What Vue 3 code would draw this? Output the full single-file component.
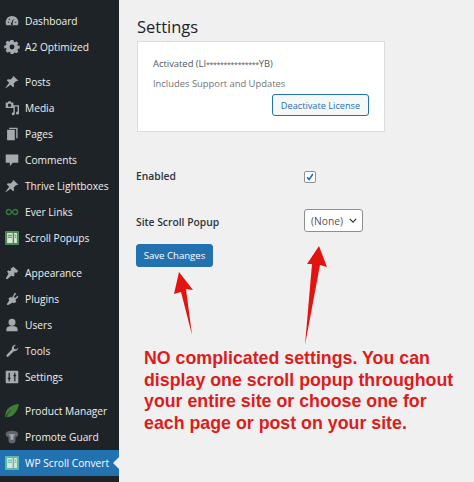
<script setup>
const groups = [
  [
    { label: 'Dashboard', icon: 'dash' },
    { label: 'A2 Optimized', icon: 'gear' },
  ],
  [
    { label: 'Posts', icon: 'pin' },
    { label: 'Media', icon: 'media' },
    { label: 'Pages', icon: 'pages' },
    { label: 'Comments', icon: 'comment' },
    { label: 'Thrive Lightboxes', icon: 'pin' },
    { label: 'Ever Links', icon: 'infinity' },
    { label: 'Scroll Popups', icon: 'scroll' },
  ],
  [
    { label: 'Appearance', icon: 'brush' },
    { label: 'Plugins', icon: 'plug' },
    { label: 'Users', icon: 'user' },
    { label: 'Tools', icon: 'wrench' },
    { label: 'Settings', icon: 'sliders' },
  ],
  [
    { label: 'Product Manager', icon: 'leaf' },
    { label: 'Promote Guard', icon: 'guard' },
    { label: 'WP Scroll Convert', icon: 'scroll', active: true },
  ],
]
</script>

<template>
  <div class="page">
    <nav class="sidebar">
      <ul v-for="(group, g) in groups" :key="g" class="group">
        <li v-for="item in group" :key="item.label" class="item" :class="{ active: item.active }">
          <svg class="icon" viewBox="0 0 20 20">
            <template v-if="item.icon === 'dash'">
              <path class="fill" d="M10 3C5 3 1 7 1 12c0 1.500.3 2.800 1 4h16c.7-1.200 1-2.500 1-4 0-5-4-9-9-9z" />
              <path class="cut" d="M9 13l2.500-6 .8.3L11 13.500a1.500 1.500 0 1 1-2-.5zM4 11h2v1.500H4zM14 11h2v1.500h-2zM6 6.500l1.300 1.300-1 1L5 7.500z" />
            </template>
            <template v-else-if="item.icon === 'gear'">
              <path class="fill" fill-rule="evenodd" d="M8 0h4l.5 2.500 1.700.7 2.100-1.400 2.800 2.800-1.400 2.100.7 1.700L21 8v4l-2.500.5-.7 1.700 1.400 2.100-2.800 2.800-2.100-1.400-1.800.8L12 20H8l-.5-2.500-1.700-.7-2.100 1.400-2.800-2.800 1.400-2.100-.7-1.700L-1 12V8l2.500-.5.7-1.700-1.400-2.100 2.800-2.800 2.100 1.400 1.800-.8zM10 6.500a3.500 3.500 0 1 0 0 7 3.500 3.500 0 0 0 0-7z" />
            </template>
            <path v-else-if="item.icon === 'pin'" class="fill" d="M11.500 1l7.500 7-2 1-1-.5-3.500 3.500.5 4-1.500 1.500-3.500-3.500L1 19l-.5-.5 5.500-7.500L2.500 7.500 4 6l4 .5L11.500 3l-.5-1z" />
            <path v-else-if="item.icon === 'media'" class="fill" fill-rule="evenodd" d="M1 2h3l1-1.500h3L9 2h3v8H1zM6.500 3.500a2.500 2.500 0 1 0 0 5 2.500 2.500 0 0 0 0-5zM13 6h7v11a2.200 2.200 0 1 1-2-2V8h-4v10a2.200 2.200 0 1 1-2-2V6z" />
            <path v-else-if="item.icon === 'pages'" class="fill" d="M6 1h12v15h-2V3H6zM3 4h11v15H3z" />
            <path v-else-if="item.icon === 'comment'" class="fill" d="M1 2h18v12h-8l-4 5v-5H1z" />
            <path v-else-if="item.icon === 'infinity'" class="green-line" d="M5.500 6.500a3.500 3.500 0 1 0 0 7c3.500 0 5.500-7 9-7a3.500 3.500 0 1 1 0 7c-3.500 0-5.500-7-9-7z" />
            <template v-else-if="item.icon === 'scroll'">
              <rect x="0" y="0" width="20" height="20" rx="1" :class="item.active ? 'teal' : 'green'" />
              <path class="page-lines" d="M3 3h8v14H3zM13 3h4v14h-4z" />
              <path :class="item.active ? 'teal-line' : 'green-dark'" d="M4 6h6M4 9h6M14 6h2M14 9h2" />
            </template>
            <path v-else-if="item.icon === 'brush'" class="fill" d="M12 1l7 6-3 3-2-1-1 3 1 1-2 2-3-1-6 5-2-1 4-7-2-3 2-2 1 1 3-1-1-2z" />
            <path v-else-if="item.icon === 'plug'" class="fill" d="M14 1l2 1-3.500 5 2 1.500L18 5l1 2-4 4 1 3-3 2-2-1-7 4-1.500-1.500L6 12 5 9l3-2 2 1z" />
            <path v-else-if="item.icon === 'user'" class="fill" d="M10 1a4.500 4.500 0 1 1 0 10 4.500 4.500 0 0 1 0-10zM2 19v-3c0-3 3-4.500 8-4.500s8 1.500 8 4.500v3z" />
            <path v-else-if="item.icon === 'wrench'" class="fill" d="M19 5c0 3-3 6-6 5L5 18c-1.500 1.500-4 -.5-2.500-2.500L10 7.500C9 4 12 1 15.500 1L12.500 4.500l1 2.500 2.500 1z" />
            <template v-else-if="item.icon === 'sliders'">
              <rect x="1" y="1" width="18" height="18" rx="1" class="fill" />
              <path class="dark-line" d="M6 4v12M14 4v12M4 12h4M12 8h4" />
            </template>
            <path v-else-if="item.icon === 'leaf'" class="leaf" d="M20 0C12 1 3 4 1 13c-.5 3-1 5-1 7 3-6 6-10 10-12-3 3-6 6-8 11 9 0 15-6 18-19z" />
            <template v-else-if="item.icon === 'guard'">
              <path class="guard" d="M10 1c5 0 9 1.500 9 5 0 3-3 4-4 4v5c0 3-2 4-5 4s-5-1-5-4v-5C4 10 1 9 1 6c0-3.500 4-5 9-5z" />
              <path class="fill" d="M5 6h10l-3 3v5H8V9z" />
            </template>
          </svg>
          <span class="label">{{ item.label }}</span>
        </li>
      </ul>
    </nav>

    <main class="main">
      <h1 class="title">Settings</h1>

      <section class="card">
        <p class="activated">Activated (LI<span class="stars">***************</span>YB)</p>
        <p class="includes">Includes Support and Updates</p>
        <div class="card-actions">
          <button class="btn-outline" type="button">Deactivate License</button>
        </div>
      </section>

      <div class="form-row enabled-row">
        <span class="field-label">Enabled</span>
        <span class="checkbox">
          <svg viewBox="0 0 12 12" class="check"><path d="M2.500 6.500l2.500 2.500 4.500-6.500" /></svg>
        </span>
      </div>

      <div class="form-row select-row">
        <span class="field-label">Site Scroll Popup</span>
        <span class="select">
          (None)
          <svg viewBox="0 0 10 6" class="chevron"><path d="M1 1l4 4 4-4" /></svg>
        </span>
      </div>

      <button class="btn-primary" type="button">Save Changes</button>

      <p class="note">
        NO complicated settings. You can<br />
        display one scroll popup throughout<br />
        your entire site or choose one for<br />
        each page or post on your site.
      </p>

      <svg class="arrows" viewBox="0 0 474 482">
        <polygon points="179,272 193,290 186,289 192,335 181,292 174,294" />
        <polygon points="319,246 327,267 320,265 305,345 312,264 307,264" />
      </svg>
    </main>
  </div>
</template>

<style>
html, body { margin: 0; background: #f0f0f1; }
</style>

<style scoped>
.page {
  display: flex;
  width: 474px;
  height: 482px;
  overflow: hidden;
  background: #f0f0f1;
  font-family: "Open Sans", "Liberation Sans", sans-serif;
}
.sidebar {
  flex: 0 0 119px;
  box-sizing: border-box;
  padding-top: 8.300px;
  background: #1d2327;
  display: flex;
  flex-direction: column;
  gap: 8.700px;
}
.group { list-style: none; margin: 0; padding: 0; }
.item {
  position: relative;
  display: flex;
  align-items: center;
  height: 26px;
  padding-left: 5px;
  color: #f0f0f1;
  font-size: 10.200px;
}
.item.active { background: #2271b1; color: #fff; }
.item.active::after {
  content: "";
  position: absolute;
  right: 0;
  top: 7px;
  border: 6px solid transparent;
  border-right-color: #f0f0f1;
}
.icon { width: 14px; height: 14px; flex: none; overflow: visible; }
.label { margin-left: 6px; white-space: nowrap; }
.fill { fill: #a7aaad; }
.cut { fill: #1d2327; }
.green { fill: #4c8a53; }
.teal { fill: #5bb9a9; }
.page-lines { fill: #d7e6d8; }
.green-dark, .teal-line { fill: none; stroke: #4c8a53; stroke-width: 1.500; }
.teal-line { stroke: #5bb9a9; }
.green-line { fill: none; stroke: #2e7d3a; stroke-width: 2; }
.dark-line { fill: none; stroke: #1d2327; stroke-width: 1.800; }
.leaf { fill: #3f7f35; }
.guard { fill: #5f6470; }

.main {
  position: relative;
  flex: 1;
  min-width: 0;
  padding: 0 0 0 17px;
  color: #3c434a;
}
.title {
  margin: 0 0 0 1px;
  padding-top: 14px;
  height: 27px;
  font-size: 16.500px;
  line-height: 26px;
  font-weight: 400;
  color: #1d2327;
}
.card {
  box-sizing: border-box;
  width: 248px;
  height: 91px;
  margin-left: 1px;
  padding: 13px 15px 0 15px;
  background: #fff;
  border: 1px solid #dcdcde;
  font-size: 9.400px;
}
.card p { margin: 0; line-height: 18.500px; }
.activated { color: #50575e; }
.stars { font-size: 7px; letter-spacing: -0.350px; }
.includes { color: #70757a; }
.card-actions { display: flex; justify-content: flex-end; margin-top: 1px; }
.btn-outline {
  box-sizing: border-box;
  height: 22px;
  width: 97px;
  padding: 0;
  background: #f6f7f7;
  border: 1px solid #2271b1;
  border-radius: 3px;
  color: #2271b1;
  font: 9.200px "Open Sans", "Liberation Sans", sans-serif;
}
.form-row { display: flex; align-items: center; }
.field-label {
  width: 168px;
  font-size: 10.300px;
  font-weight: 600;
  color: #2c3338;
}
.enabled-row { margin-top: 34px; height: 20px; }
.select-row { margin-top: 23px; height: 23px; }
.select-row .field-label { padding-top: 2px; }
.checkbox {
  box-sizing: border-box;
  display: flex;
  width: 12px;
  height: 12px;
  margin-top: 2px;
  background: #fff;
  border: 1px solid #8c8f94;
  border-radius: 2px;
}
.check { width: 100%; height: 100%; }
.check path { fill: none; stroke: #2271b1; stroke-width: 2; }
.select {
  box-sizing: border-box;
  display: flex;
  align-items: center;
  justify-content: space-between;
  width: 59px;
  height: 23px;
  padding: 0 5px 0 6px;
  background: #fff;
  border: 1px solid #8c8f94;
  border-radius: 3px;
  font-size: 10.300px;
  color: #50575e;
}
.chevron { width: 8px; height: 5px; }
.chevron path { fill: none; stroke: #2c3338; stroke-width: 1.500; }
.btn-primary {
  display: block;
  box-sizing: border-box;
  width: 77px;
  height: 23px;
  margin-top: 12px;
  padding: 0;
  background: #2271b1;
  border: 1px solid #2271b1;
  border-radius: 3px;
  color: #fff;
  font: 9.600px "Open Sans", "Liberation Sans", sans-serif;
}
.note {
  margin: 81px 0 0 8px;
  font-family: "Liberation Sans", Arial, sans-serif;
  font-size: 17.800px;
  font-weight: 700;
  line-height: 21.700px;
  color: #dd1c1c;
  white-space: nowrap;
}
.arrows {
  position: absolute;
  left: -119px;
  top: 0;
  width: 474px;
  height: 482px;
  pointer-events: none;
}
.arrows polygon { fill: #e3140f; }
</style>
